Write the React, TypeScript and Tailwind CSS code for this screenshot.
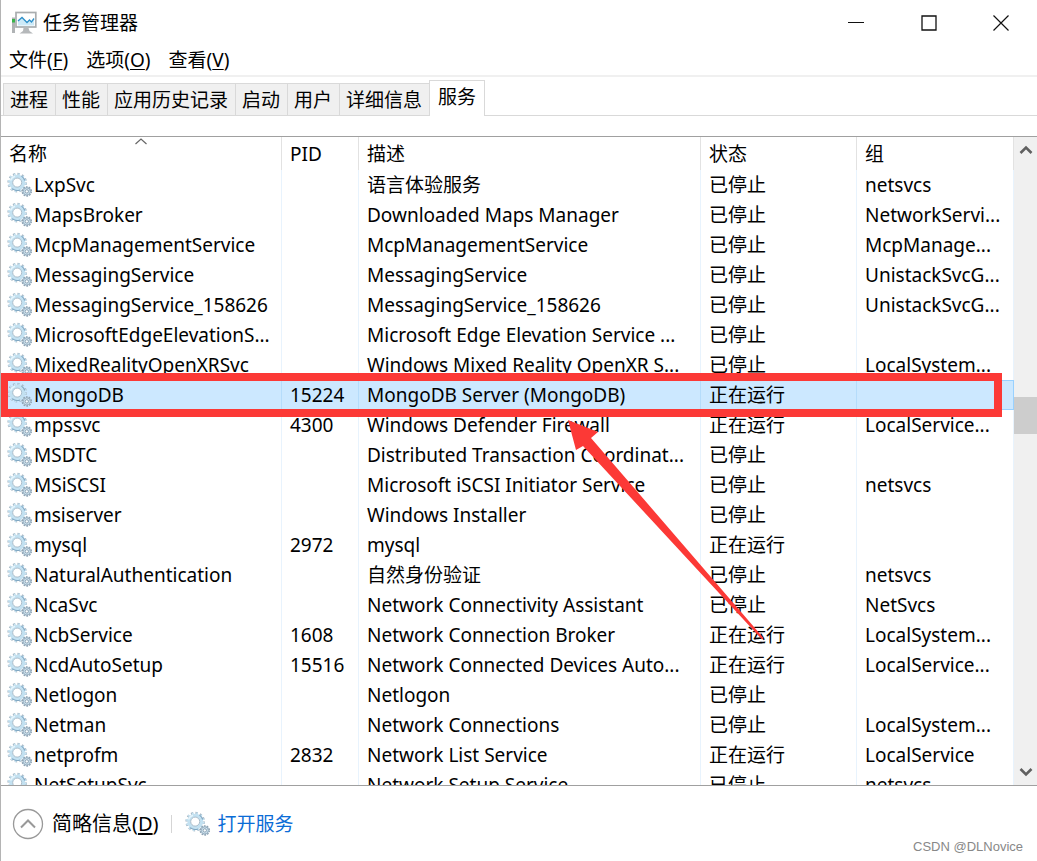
import React from "react";

type Service = [name: string, pid: string, description: string, status: string, group: string];

const STOPPED = "已停止";
const RUNNING = "正在运行";

const services: Service[] = [
  ["LxpSvc", "", "语言体验服务", STOPPED, "netsvcs"],
  ["MapsBroker", "", "Downloaded Maps Manager", STOPPED, "NetworkServi..."],
  ["McpManagementService", "", "McpManagementService", STOPPED, "McpManage..."],
  ["MessagingService", "", "MessagingService", STOPPED, "UnistackSvcG..."],
  ["MessagingService_158626", "", "MessagingService_158626", STOPPED, "UnistackSvcG..."],
  ["MicrosoftEdgeElevationS...", "", "Microsoft Edge Elevation Service ...", STOPPED, ""],
  ["MixedRealityOpenXRSvc", "", "Windows Mixed Reality OpenXR S...", STOPPED, "LocalSystem..."],
  ["MongoDB", "15224", "MongoDB Server (MongoDB)", RUNNING, ""],
  ["mpssvc", "4300", "Windows Defender Firewall", RUNNING, "LocalService..."],
  ["MSDTC", "", "Distributed Transaction Coordinat...", STOPPED, ""],
  ["MSiSCSI", "", "Microsoft iSCSI Initiator Service", STOPPED, "netsvcs"],
  ["msiserver", "", "Windows Installer", STOPPED, ""],
  ["mysql", "2972", "mysql", RUNNING, ""],
  ["NaturalAuthentication", "", "自然身份验证", STOPPED, "netsvcs"],
  ["NcaSvc", "", "Network Connectivity Assistant", STOPPED, "NetSvcs"],
  ["NcbService", "1608", "Network Connection Broker", RUNNING, "LocalSystem..."],
  ["NcdAutoSetup", "15516", "Network Connected Devices Auto...", RUNNING, "LocalService..."],
  ["Netlogon", "", "Netlogon", STOPPED, ""],
  ["Netman", "", "Network Connections", STOPPED, "LocalSystem..."],
  ["netprofm", "2832", "Network List Service", RUNNING, "LocalService"],
  ["NetSetupSvc", "", "Network Setup Service", STOPPED, "netsvcs"],
];

const tabs = ["进程", "性能", "应用历史记录", "启动", "用户", "详细信息", "服务"];
const menus: [string, string][] = [["文件", "F"], ["选项", "O"], ["查看", "V"]];
const columns = ["名称", "PID", "描述", "状态", "组"];

function GearsIcon() {
  return (
    <svg width="26" height="26" viewBox="0 0 26 26" className="shrink-0" aria-hidden="true">
      <circle cx="10.2" cy="10.6" r="8.4" fill="none" stroke="#a3b4c1" strokeWidth="2.8" strokeDasharray="2.2 2.2" />
      <circle cx="10.2" cy="10.6" r="8.3" fill="none" stroke="#c6e4f4" strokeWidth="2.2" strokeDasharray="1.5 2.9" strokeDashoffset="-0.4" />
      <circle cx="10.2" cy="10.6" r="6.2" fill="none" stroke="#c3e1f1" strokeWidth="3.4" />
      <path d="M5.200 16.600A7.800 7.800 0 0 0 13 17.900M17.700 8.500A7.800 7.800 0 0 0 14.500 4.100" fill="none" stroke="#7fa6c2" strokeWidth="1.100" />
      <path d="M3.500 8.500A7 7 0 0 1 8 4.300" fill="none" stroke="#e6f5fc" strokeWidth="1.600" />
      <circle cx="10.2" cy="10.6" r="4.5" fill="#fff" stroke="#a3b7c5" strokeWidth="0.900" />
      <circle cx="19.8" cy="19.4" r="4.4" fill="#c9dfed" stroke="#8fa3b3" strokeWidth="1.700" strokeDasharray="1.700 1.060" />
      <circle cx="19.8" cy="19.4" r="3.5" fill="#d3e7f3" stroke="#9bb2c3" strokeWidth="1" />
      <circle cx="19.8" cy="19.4" r="1.7" fill="#f7fbfd" stroke="#8198aa" strokeWidth="0.900" />
    </svg>
  );
}

function MonitorIcon() {
  return (
    <svg width="26" height="24" viewBox="0 0 26 24" aria-hidden="true">
      <path d="M1 6.500h3v15.500H1z" fill="#b0b3b5" />
      <path d="M1 8h3v3.500H1z" fill="#39b54a" />
      <path d="M12.500 17h5l1 3 3.500 2.500H8.500L12 20z" fill="#b5b8ba" />
      <rect x="5" y="1.500" width="19.800" height="14.500" fill="#fff" stroke="#a9adaf" strokeWidth="1.700" />
      <path d="M7 10l4-3.500 5 5 2.500-2.500 2 2L23 8v6.500H7z" fill="#cdeaf8" />
      <path d="m7 10 4-3.500 5 5 2.500-2.500 2 2L23 7.500" fill="none" stroke="#2d8fc9" strokeWidth="1.300" />
    </svg>
  );
}

function Chevron({ down = false }: { down?: boolean }) {
  return (
    <svg width="14" height="10" viewBox="0 0 14 10" aria-hidden="true">
      <path d={down ? "M1.500 2 7 7.500 12.500 2" : "M1.500 8 7 2.500 12.500 8"} fill="none" stroke="#606060" strokeWidth="2.600" />
    </svg>
  );
}

export default function App() {
  return (
    <div className="flex h-screen flex-col overflow-hidden border-l border-[#b4b4b4] bg-white font-['Noto_Sans','Noto_Sans_CJK_SC',sans-serif] text-[19px] leading-[30px] text-black">
      <header className="flex h-[45px] shrink-0 items-center pl-[10px]">
        <MonitorIcon />
        <h1 className="ml-[6px] flex-1">任务管理器</h1>
        <button aria-label="最小化" className="flex h-full w-[73px] items-center justify-center">
          <svg width="16" height="16" viewBox="0 0 16 16"><path d="M0 7.500h16" stroke="#111" /></svg>
        </button>
        <button aria-label="最大化" className="flex h-full w-[73px] items-center justify-center">
          <svg width="16" height="16" viewBox="0 0 16 16"><path d="M1 1h14v14H1z" fill="none" stroke="#111" strokeWidth="1.300" /></svg>
        </button>
        <button aria-label="关闭" className="flex h-full w-[72px] items-center justify-center">
          <svg width="16" height="16" viewBox="0 0 16 16"><path d="m.5.500 15 15m0-15-15 15" stroke="#111" strokeWidth="1.200" /></svg>
        </button>
      </header>

      <nav className="flex h-[32px] shrink-0 items-center gap-[18px] border-b-2 border-[#f0f0f0] pl-2" aria-label="菜单">
        {menus.map(([label, key]) => (
          <button key={key}>{label}(<span className="underline underline-offset-2">{key}</span>)</button>
        ))}
      </nav>

      <div role="tablist" className="flex h-[39px] shrink-0 items-end border-b border-[#d9d9d9] pl-[2px]">
        {tabs.map((tab, i) =>
          i === tabs.length - 1 ? (
            <button key={tab} role="tab" aria-selected="true" className="-mb-px h-[36px] border border-b-0 border-[#d9d9d9] bg-white px-2 pb-1">
              {tab}
            </button>
          ) : (
            <button key={tab} role="tab" aria-selected="false" className="h-[32px] border-t border-l border-[#d9d9d9] bg-[#f0f0f0] pr-[7px] pl-[6px]">
              {tab}
            </button>
          ),
        )}
      </div>

      <main className="relative mt-5 flex min-h-0 flex-1 overflow-hidden border-y border-[#a0a0a0]">
        <div className="min-w-0 flex-1 overflow-hidden">
          <table className="w-full table-fixed border-separate border-spacing-0 text-left">
            <colgroup>
              <col className="w-[281px]" />
              <col className="w-[77px]" />
              <col />
              <col className="w-[156px]" />
              <col className="w-[157px]" />
            </colgroup>
            <thead>
              <tr>
                {columns.map((column, i) => (
                  <th key={column} scope="col" className="relative h-[33px] border-r border-[#e2e2e2] p-0 pl-[8px] font-normal">
                    {column}
                    {i === 0 && (
                      <svg width="12" height="7" viewBox="0 0 12 7" className="absolute top-px left-1/2 -translate-x-1/2" aria-hidden="true">
                        <path d="m.5 6 5.500-5 5.500 5" fill="none" stroke="#666" strokeWidth="1.200" />
                      </svg>
                    )}
                  </th>
                ))}
              </tr>
            </thead>
            <tbody>
              {services.map((service) => {
                const selected = service[0] === "MongoDB";
                return (
                  <tr key={service[0]} className={selected ? "bg-[#cce8ff] outline-1 -outline-offset-1 outline-[#99d1ff]" : ""}>
                    {service.map((value, i) => (
                      <td
                        key={i}
                        className={
                          selected
                            ? "h-[30px] overflow-hidden border-r border-[#b5dcfb] p-0 pl-[8px] whitespace-nowrap"
                            : "h-[30px] overflow-hidden border-r border-[#e8f3fd] p-0 pl-[8px] whitespace-nowrap"
                        }
                      >
                        {i === 0 ? (
                          <span className="-ml-[2px] flex items-center gap-px">
                            <GearsIcon />
                            <span>{value}</span>
                          </span>
                        ) : (
                          value
                        )}
                      </td>
                    ))}
                  </tr>
                );
              })}
            </tbody>
          </table>
        </div>

        <div className="flex w-[23px] shrink-0 flex-col items-center bg-[#f0f0f0]">
          <button aria-label="向上滚动" className="flex h-[26px] w-full items-center justify-center"><Chevron /></button>
          <div className="mt-[234px] h-[37px] w-full bg-[#cdcdcd]" />
          <button aria-label="向下滚动" className="mt-auto flex h-[26px] w-full items-center justify-center"><Chevron down /></button>
        </div>

        <div className="pointer-events-none absolute top-[236px] right-[35px] -left-px h-[44px] border-8 border-[#fc3936]" />
        <svg width="200" height="222" viewBox="0 0 200 222" className="pointer-events-none absolute top-[283px] left-[564px]" aria-hidden="true">
          <path d="M3 0 33 12 26 18 198.500 218 197 219.500 18 26 11 30z" fill="#fc3936" />
        </svg>
      </main>

      <footer className="flex h-[75px] shrink-0 items-center pt-px pl-[11px]">
        <button className="flex items-center text-[20px]">
          <svg width="32" height="32" viewBox="0 0 32 32" aria-hidden="true">
            <circle cx="16" cy="16" r="14.500" fill="none" stroke="#999" strokeWidth="1.300" />
            <path d="m9 19.500 7-7 7 7" fill="none" stroke="#999" strokeWidth="2" />
          </svg>
          <span className="ml-2">简略信息(<span className="underline underline-offset-2">D</span>)</span>
        </button>
        <span className="mx-3 h-[18px] w-px bg-[#d5d5d5]" />
        <a href="#services" className="ml-px flex items-center gap-[7px] text-[#0a6cd6]"><GearsIcon />打开服务</a>
        <span className="mr-[14px] ml-auto self-end pb-px font-['Liberation_Sans',sans-serif] text-[13px] leading-[26px] text-[#888]">CSDN @DLNovice</span>
      </footer>
    </div>
  );
}
